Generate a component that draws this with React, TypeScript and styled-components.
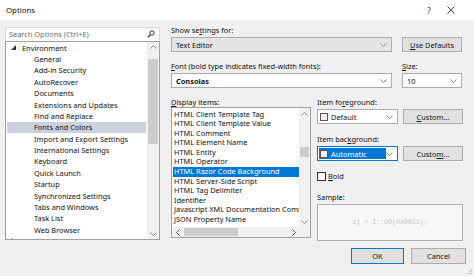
import styled, { createGlobalStyle } from 'styled-components';

const GlobalStyle = createGlobalStyle`
	html, body {
		margin: 0;
		padding: 0;
		background: #f0f0f0;
	}
	* {
		box-sizing: border-box;
	}
`;

const treeItems = [
	'General',
	'Add-in Security',
	'AutoRecover',
	'Documents',
	'Extensions and Updates',
	'Find and Replace',
	'Fonts and Colors',
	'Import and Export Settings',
	'International Settings',
	'Keyboard',
	'Quick Launch',
	'Startup',
	'Synchronized Settings',
	'Tabs and Windows',
	'Task List',
	'Web Browser',
];

const displayItems = [
	'HTML Client Template Tag',
	'HTML Client Template Value',
	'HTML Comment',
	'HTML Element Name',
	'HTML Entity',
	'HTML Operator',
	'HTML Razor Code Background',
	'HTML Server-Side Script',
	'HTML Tag Delimiter',
	'Identifier',
	'Javascript XML Documentation Comment',
	'JSON Property Name',
];

const Chevron = ({ up = false }: { up?: boolean }) => (
	<svg width='7' height='4' viewBox='0 0 7 4'>
		<path
			d={up ? 'M0.5 3.5 L3.5 0.5 L6.5 3.5' : 'M0.5 0.5 L3.5 3.5 L6.5 0.5'}
			fill='none'
			stroke='#7a7a7a'
			strokeWidth='0.9'
		/>
	</svg>
);

const SideArrow = ({ left = false }: { left?: boolean }) => (
	<svg width='4' height='7' viewBox='0 0 4 7'>
		<path
			d={left ? 'M3.5 0.5 L0.5 3.5 L3.5 6.5' : 'M0.5 0.5 L3.5 3.5 L0.5 6.5'}
			fill='none'
			stroke='#606060'
			strokeWidth='1'
		/>
	</svg>
);

const App = () => {
	return (
		<>
			<GlobalStyle />
			<Window>
				<TitleBar>
					<Title>Options</Title>
					<CaptionButton>?</CaptionButton>
					<CaptionButton>
						<svg width='8' height='8' viewBox='0 0 8 8'>
							<path d='M0.5 0.5 L7.5 7.5 M7.5 0.5 L0.5 7.5' stroke='#333' strokeWidth='0.9' />
						</svg>
					</CaptionButton>
				</TitleBar>

				<Body>
					<LeftPane>
						<SearchBox>
							<span>Search Options (Ctrl+E)</span>
							<svg width='8' height='8' viewBox='0 0 8 8'>
								<circle cx='5' cy='3' r='2.2' fill='none' stroke='#333' strokeWidth='1' />
								<path d='M3.4 4.6 L0.8 7.2' stroke='#333' strokeWidth='1.3' />
							</svg>
						</SearchBox>
						<Tree>
							<TreeRows>
								<TreeRow $level={0}>
									<Expander>
										<svg width='5' height='5' viewBox='0 0 5 5'>
											<path d='M5 0 L5 5 L0 5 Z' fill='#333' />
										</svg>
									</Expander>
									Environment
								</TreeRow>
								{treeItems.map(item => (
									<TreeRow key={item} $level={1} $selected={item === 'Fonts and Colors'}>
										{item}
									</TreeRow>
								))}
								<TreeRow $level={0}>
									<Expander>
										<svg width='5' height='6' viewBox='0 0 5 6'>
											<path d='M0.5 0.5 L4 3 L0.5 5.5 Z' fill='none' stroke='#555' strokeWidth='0.8' />
										</svg>
									</Expander>
									Projects and Solutions
								</TreeRow>
							</TreeRows>
							<VScroll $width={12}>
								<ScrollArrow>
									<Chevron up />
								</ScrollArrow>
								<ScrollTrack>
									<Thumb $top={6} $size={85} />
								</ScrollTrack>
								<ScrollArrow>
									<Chevron />
								</ScrollArrow>
							</VScroll>
						</Tree>
					</LeftPane>

					<RightPane>
						<TopGrid>
							<Label>
								Show se<u>t</u>tings for:
							</Label>
							<span />
							<Combo $readonly>
								<ComboText>Text Editor</ComboText>
								<Chevron />
							</Combo>
							<Button>
								<u>U</u>se Defaults
							</Button>
							<Label $top={9}>
								<u>F</u>ont (bold type indicates fixed-width fonts):
							</Label>
							<Label $top={9}>
								<u>S</u>ize:
							</Label>
							<Combo>
								<ComboText $bold>Consolas</ComboText>
								<Chevron />
							</Combo>
							<Combo>
								<ComboText>10</ComboText>
								<Chevron />
							</Combo>
						</TopGrid>

						<BottomGrid>
							<Column>
								<Label>
									<u>D</u>isplay items:
								</Label>
								<ListBox>
									<ListInner>
										<ListRows>
											{displayItems.map(item => (
												<ListRow key={item} $selected={item === 'HTML Razor Code Background'}>
													{item}
												</ListRow>
											))}
										</ListRows>
										<VScroll $width={11}>
											<ScrollArrow>
												<Chevron up />
											</ScrollArrow>
											<ScrollTrack>
												<Thumb $top={28} $size={10} />
											</ScrollTrack>
											<ScrollArrow>
												<Chevron />
											</ScrollArrow>
										</VScroll>
									</ListInner>
									<HScroll>
										<HArrow>
											<SideArrow left />
										</HArrow>
										<HTrack>
											<HThumb />
										</HTrack>
										<HArrow>
											<SideArrow />
										</HArrow>
										<Corner />
									</HScroll>
								</ListBox>
							</Column>

							<Column>
								<Label>
									Item fo<u>r</u>eground:
								</Label>
								<ColorRow>
									<Combo>
										<ColorValue>
											<Swatch />
											Default
										</ColorValue>
										<Chevron />
									</Combo>
									<Button>
										<u>C</u>ustom...
									</Button>
								</ColorRow>
								<Label $top={10}>
									Item bac<u>k</u>ground:
								</Label>
								<ColorRow>
									<Combo $focused>
										<ColorValue $selected>
											<Swatch $light />
											Automatic
										</ColorValue>
										<Chevron />
									</Combo>
									<Button>
										Custo<u>m</u>...
									</Button>
								</ColorRow>
								<CheckRow>
									<CheckBox />
									<span>
										<u>B</u>old
									</span>
								</CheckRow>
								<Label $top={11}>Sample:</Label>
								<SampleBox>ij = I::oO(0x0011);</SampleBox>
							</Column>
						</BottomGrid>
					</RightPane>
				</Body>

				<Footer>
					<Button $default $width={53}>
						OK
					</Button>
					<Button $width={55}>Cancel</Button>
					<Grip>
						<svg width='5' height='5' viewBox='0 0 5 5'>
							<rect x='4' y='0' width='1' height='1' fill='#b5b5b5' />
							<rect x='2' y='2' width='1' height='1' fill='#b5b5b5' />
							<rect x='4' y='2' width='1' height='1' fill='#b5b5b5' />
							<rect x='0' y='4' width='1' height='1' fill='#b5b5b5' />
							<rect x='2' y='4' width='1' height='1' fill='#b5b5b5' />
							<rect x='4' y='4' width='1' height='1' fill='#b5b5b5' />
						</svg>
					</Grip>
				</Footer>
			</Window>
		</>
	);
};

export default App;

const Window = styled.div`
	width: 474px;
	height: 276px;
	background: #f0f0f0;
	display: flex;
	flex-direction: column;
	font-family: 'Segoe UI', 'Noto Sans', sans-serif;
	font-size: 7.4px;
	color: #111;
	overflow: hidden;
`;

const TitleBar = styled.div`
	height: 20px;
	flex: none;
	background: #fff;
	display: flex;
	align-items: center;
	padding-left: 6px;
	padding-right: 12px;
`;

const Title = styled.span`
	flex: 1;
	font-size: 7.8px;
`;

const CaptionButton = styled.span`
	width: 22px;
	display: flex;
	justify-content: center;
	align-items: center;
	font-size: 8px;
	color: #333;
`;

const Body = styled.div`
	display: flex;
	gap: 11px;
	padding: 5px 0 0 5px;
	height: 220px;
`;

const LeftPane = styled.div`
	width: 155px;
	margin-top: 2px;
	display: flex;
	flex-direction: column;
`;

const SearchBox = styled.div`
	height: 14px;
	background: #fff;
	border: 1px solid #d9d9d9;
	border-bottom: none;
	display: flex;
	align-items: center;
	justify-content: space-between;
	padding: 0 4px 0 3px;
	color: #6d6d6d;
`;

const Tree = styled.div`
	height: 201px;
	background: #fff;
	border: 1px solid #a0a0a0;
	display: flex;
	overflow: hidden;
`;

const TreeRows = styled.div`
	flex: 1;
	padding: 0 1px;
	overflow: hidden;
`;

const TreeRow = styled.div<{ $level: number; $selected?: boolean }>`
	height: 11.4px;
	display: flex;
	align-items: center;
	padding-left: ${({ $level }) => ($level === 0 ? 4 : 27)}px;
	background: ${({ $selected }) => ($selected ? '#cdd0de' : 'transparent')};
	white-space: nowrap;
`;

const Expander = styled.span`
	width: 11px;
	display: flex;
	align-items: center;
	margin-top: -1px;
`;

const VScroll = styled.div<{ $width: number }>`
	width: ${({ $width }) => $width}px;
	flex: none;
	background: #f0f0f0;
	display: flex;
	flex-direction: column;
`;

const ScrollArrow = styled.div`
	height: 11px;
	display: flex;
	justify-content: center;
	align-items: center;
`;

const ScrollTrack = styled.div`
	flex: 1;
	position: relative;
`;

const Thumb = styled.div<{ $top: number; $size: number }>`
	position: absolute;
	left: 1px;
	right: 1px;
	top: ${({ $top }) => $top}px;
	height: ${({ $size }) => $size}px;
	background: #cdcdcd;
`;

const RightPane = styled.div`
	width: 292px;
	display: flex;
	flex-direction: column;
`;

const TopGrid = styled.div`
	display: grid;
	grid-template-columns: 221px 60px;
	column-gap: 10px;
	align-items: end;
`;

const Label = styled.div<{ $top?: number }>`
	height: 10px;
	line-height: 10px;
	margin-top: ${({ $top }) => $top ?? 0}px;
	margin-bottom: 2px;
	white-space: nowrap;
`;

const Combo = styled.div<{ $readonly?: boolean; $focused?: boolean }>`
	height: 15px;
	display: flex;
	align-items: center;
	justify-content: space-between;
	padding: 0 4px 0 2px;
	background: ${({ $readonly }) => ($readonly ? '#e5e5e5' : '#fff')};
	border: 1px solid ${({ $focused }) => ($focused ? '#0078d7' : '#acacac')};
	flex: 1;
	min-width: 0;
`;

const ComboText = styled.span<{ $bold?: boolean }>`
	padding-left: 2px;
	font-weight: ${({ $bold }) => ($bold ? 700 : 400)};
`;

const Button = styled.div<{ $default?: boolean; $width?: number }>`
	height: ${({ $width }) => ($width ? 16 : 15)}px;
	width: ${({ $width }) => ($width ? `${$width}px` : 'auto')};
	display: flex;
	justify-content: center;
	align-items: center;
	background: #e1e1e1;
	border: 1px solid ${({ $default }) => ($default ? '#0078d7' : '#adadad')};
	white-space: nowrap;
`;

const BottomGrid = styled.div`
	display: grid;
	grid-template-columns: 140px 146px;
	column-gap: 6px;
	margin-top: 9px;
`;

const Column = styled.div`
	display: flex;
	flex-direction: column;
`;

const ListBox = styled.div`
	height: 131px;
	margin-top: -2px;
	background: #fff;
	border: 1px solid #a0a0a0;
	display: flex;
	flex-direction: column;
`;

const ListInner = styled.div`
	flex: 1;
	display: flex;
	min-height: 0;
`;

const ListRows = styled.div`
	flex: 1;
	padding: 1.5px 0 0 1px;
	overflow: hidden;
`;

const ListRow = styled.div<{ $selected?: boolean }>`
	height: 9.6px;
	line-height: 9.6px;
	padding-left: 1px;
	white-space: nowrap;
	background: ${({ $selected }) => ($selected ? '#0078d7' : 'transparent')};
	color: ${({ $selected }) => ($selected ? '#fff' : '#111')};
`;

const HScroll = styled.div`
	height: 10px;
	flex: none;
	display: flex;
	background: #f0f0f0;
`;

const HArrow = styled.div`
	width: 11px;
	display: flex;
	justify-content: center;
	align-items: center;
`;

const HTrack = styled.div`
	flex: 1;
	display: flex;
	align-items: center;
`;

const HThumb = styled.div`
	width: 54px;
	height: 8px;
	margin-left: 1px;
	background: #cdcdcd;
`;

const Corner = styled.div`
	width: 11px;
	background: #f0f0f0;
`;

const ColorRow = styled.div`
	display: flex;
	gap: 5px;
	& > div:last-child {
		width: 60px;
		flex: none;
	}
`;

const ColorValue = styled.span<{ $selected?: boolean }>`
	display: flex;
	align-items: center;
	gap: 3px;
	height: 11px;
	width: 67px;
	padding-left: 1px;
	margin-left: -1px;
	background: ${({ $selected }) => ($selected ? '#0078d7' : 'transparent')};
	color: ${({ $selected }) => ($selected ? '#fff' : '#111')};
`;

const Swatch = styled.span<{ $light?: boolean }>`
	width: 8px;
	height: 8px;
	border: 1px solid #555;
	background: ${({ $light }) => ($light ? '#fff' : '#f0f0f0')};
`;

const CheckRow = styled.div`
	display: flex;
	align-items: center;
	gap: 2px;
	margin-top: 10px;
`;

const CheckBox = styled.span`
	width: 9px;
	height: 9px;
	border: 1px solid #333;
	background: #fff;
`;

const SampleBox = styled.div`
	height: 37px;
	background: #f7f7f7;
	border: 1px solid #b0b0b0;
	display: flex;
	justify-content: center;
	align-items: center;
	font-family: 'Liberation Mono', 'DejaVu Sans Mono', monospace;
	font-size: 6.6px;
	color: #c4c4c4;
`;

const Footer = styled.div`
	flex: 1;
	display: flex;
	justify-content: flex-end;
	align-items: flex-start;
	gap: 7px;
	padding: 8px 8px 0 0;
	position: relative;
`;

const Grip = styled.div`
	position: absolute;
	right: 2px;
	bottom: 2px;
	display: flex;
`;
